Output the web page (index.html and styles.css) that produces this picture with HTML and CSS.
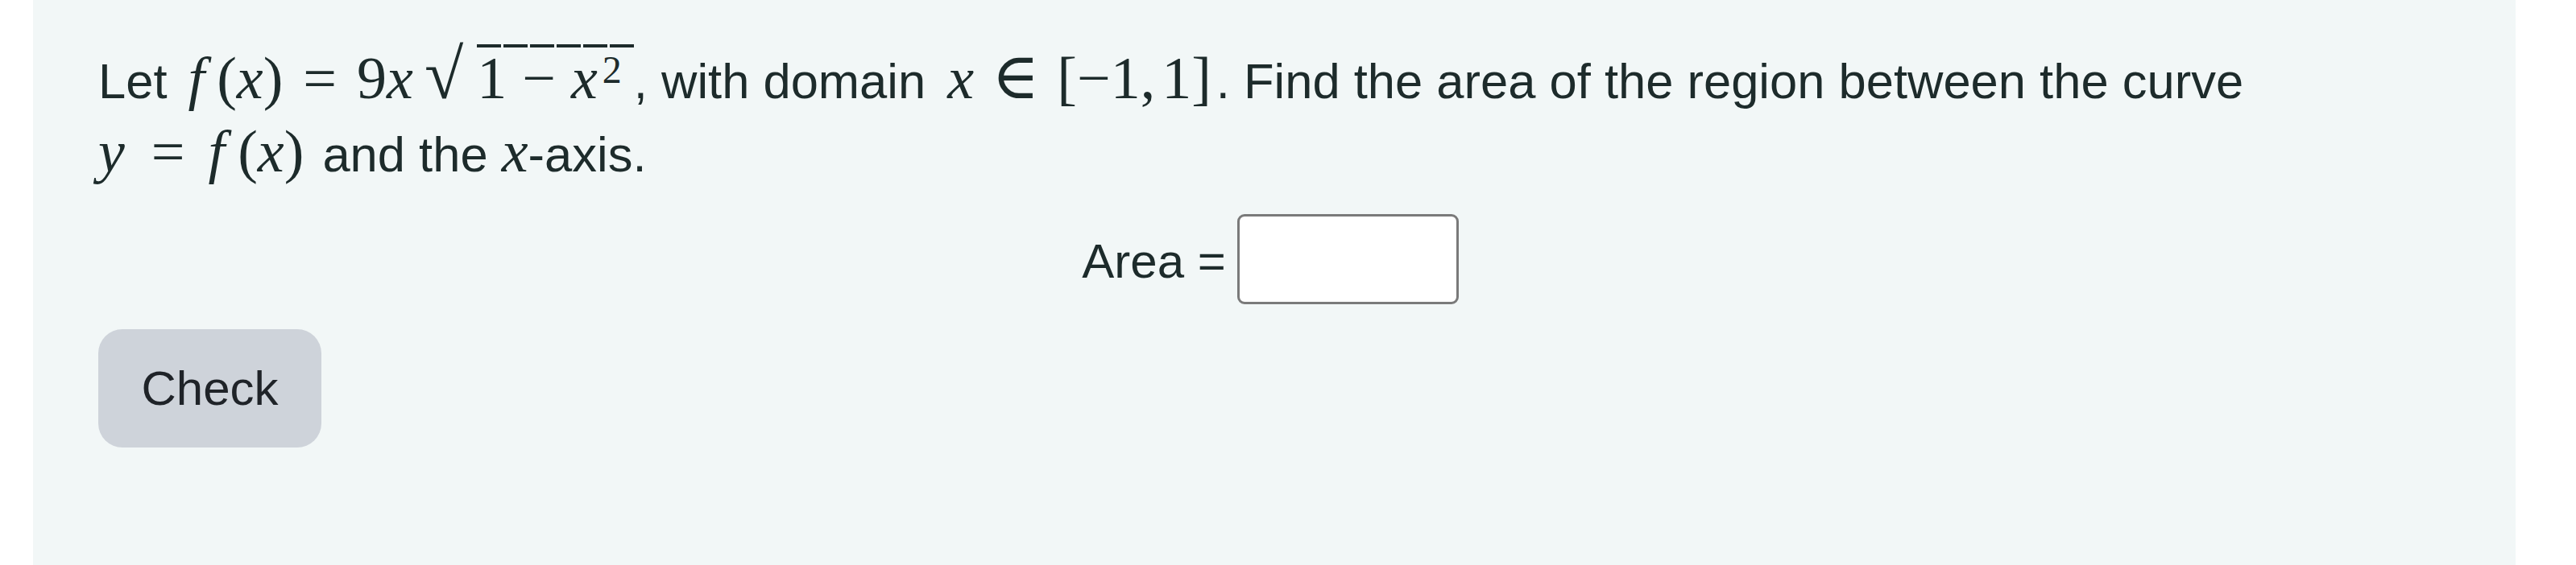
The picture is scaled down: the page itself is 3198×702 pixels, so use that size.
FILE: index.html
```html
<!DOCTYPE html>
<html lang="en">
<head>
<meta charset="utf-8">
<title>Question</title>
<link rel="stylesheet" href="styles.css">
</head>
<body>
<div class="panel">
  <div class="qtext">
    <p class="stem">Let <span class="m lead"><span class="mi fi">f</span><span class="mo">(</span><span class="mi">x</span><span class="mo">)</span><span class="rel">=</span><span class="mn">9</span><span class="mi">x</span><span class="radic">√</span><span class="rad"><span class="mn">1</span><span class="bin">−</span><span class="mi">x</span><span class="sup">2</span></span></span>, with domain <span class="m dom"><span class="mi">x</span><span class="rel elem">∈</span><span class="mo">[</span><span class="mo">−</span><span class="mn">1</span><span class="punct">,</span><span class="mn">1</span><span class="mo">]</span></span>. Find the area of the region between the curve <span class="m tail"><span class="mi">y</span><span class="rel">=</span><span class="mi fi">f</span><span class="mo">(</span><span class="mi">x</span><span class="mo">)</span></span> and the <span class="m"><span class="mi">x</span></span>-axis.</p>
  </div>
  <div class="answer">
    <label class="alabel" for="ans">Area =</label>
    <input id="ans" class="ainput" type="text">
  </div>
  <div class="actions">
    <button class="check" type="button">Check</button>
  </div>
</div>
</body>
</html>
```
FILE: styles.css
```css
html, body {
  margin: 0;
  padding: 0;
  background: #ffffff;
}
body {
  font-family: "Liberation Sans", Arial, sans-serif;
  color: #1d2b2b;
}
.panel {
  margin-left: 41px;
  width: 3082px;
  height: 702px;
  box-sizing: border-box;
  background: #f2f7f7;
  padding: 55px 85px 0 81px;
  display: flex;
  flex-direction: column;
}
.stem {
  margin: 0;
  font-size: 61.5px;
  line-height: 91px;
  width: 2760px;
}
.m {
  font-family: "Liberation Serif", "DejaVu Serif", "Times New Roman", serif;
  font-size: 74px;
  line-height: 0;
}
.mi {
  font-style: italic;
}
.fi {
  margin-left: 14px;
  margin-right: 14px;
}
.lead .fi {
  margin-left: 9px;
  margin-right: 15px;
}
.tail .fi {
  margin-left: 4px;
  margin-right: 16px;
}
.mo, .mn {
  font-style: normal;
}
.rel {
  margin: 0 25px;
}
.tail .rel {
  margin-left: 33px;
}
.elem {
  font-family: "DejaVu Serif", serif;
  font-size: 80px;
  margin: 0 22px;
}
.dom {
  margin-left: 10px;
  margin-right: 6px;
}
.tail {
  margin-right: 6px;
}
.bin {
  margin: 0 19px;
}
.punct {
  margin-right: 8px;
}
.radic {
  font-size: 88px;
  margin-left: 14px;
  margin-right: 17px;
}
.rad {
  padding-top: 1px;
  background: repeating-linear-gradient(90deg, #1d2b2b 0 30px, transparent 30px 33px) left top / 100% 4px no-repeat;
  padding-right: 15px;
}
.sup {
  font-size: 48px;
  vertical-align: 19px;
  line-height: 0;
  margin-left: 6px;
}
.answer {
  margin-top: 29px;
  display: flex;
  justify-content: center;
  align-items: center;
  gap: 14px;
  padding-right: 6px;
}
.alabel {
  font-size: 60px;
  line-height: 90px;
  padding-top: 6px;
}
.ainput {
  width: 275px;
  height: 112px;
  box-sizing: border-box;
  border: 3px solid #7a7a7a;
  border-radius: 9px;
  background: #ffffff;
  margin: 0;
  padding: 0 10px;
  font-size: 58px;
}
.actions {
  margin-top: 31px;
  display: flex;
}
.check {
  width: 277px;
  height: 147px;
  border: none;
  border-radius: 30px;
  background: #ced3da;
  color: #1f2328;
  font-family: "Liberation Sans", Arial, sans-serif;
  font-size: 60px;
  padding: 0;
}
```
